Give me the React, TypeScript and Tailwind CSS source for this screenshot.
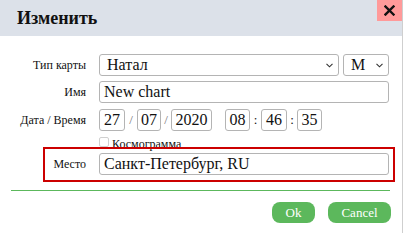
import React from "react";

function Box({ w, v }: { w: string; v: string }) {
  return (
    <div className={`${w} h-[22px] border border-[#b4b4b4] rounded-[3px] flex items-center justify-center text-[16px] leading-none`}>
      {v}
    </div>
  );
}

export default function App() {
  return (
    <div className="w-[403px] h-[233px] bg-white overflow-hidden border-r border-[#cfcfcf] font-['Liberation_Serif'] text-[#111]">
      <div className="h-[36px] bg-[#dce1e9] flex items-start justify-between">
        <div className="pl-[17px] pt-[9px] text-[18px] leading-[18px] font-bold">Изменить</div>
        <div className="w-[25px] h-[21px] bg-[#ff9a9a] flex items-center justify-center">
          <svg width="11" height="11" viewBox="0 0 11 11">
            <path d="M1.5 1.5 L9.5 9.5 M9.5 1.5 L1.5 9.5" stroke="#111" strokeWidth="2.4" strokeLinecap="square" />
          </svg>
        </div>
      </div>

      <div className="flex flex-col">
        <div className="flex items-center h-[22px] mt-[18px]">
          <div className="w-[86px] text-right text-[12px] leading-none">Тип карты</div>
          <div className="ml-[13px] w-[240px] h-[22px] border border-[#b4b4b4] rounded-[3px] flex items-center justify-between pl-[7px] pr-[5px] text-[16px]">
            <span>Натал</span>
            <svg width="7" height="5" viewBox="0 0 7 5">
              <polyline points="0.5,0.8 3.5,3.8 6.5,0.8" fill="none" stroke="#333" strokeWidth="1.1" />
            </svg>
          </div>
          <div className="ml-[4px] w-[46px] h-[22px] border border-[#b4b4b4] rounded-[3px] flex items-center justify-between pl-[7px] pr-[5px] text-[16px]">
            <span>M</span>
            <svg width="7" height="5" viewBox="0 0 7 5">
              <polyline points="0.5,0.8 3.5,3.8 6.5,0.8" fill="none" stroke="#333" strokeWidth="1.1" />
            </svg>
          </div>
        </div>

        <div className="flex items-center h-[22px] mt-[5px]">
          <div className="w-[86px] text-right text-[12px] leading-none">Имя</div>
          <div className="ml-[13px] w-[290px] h-[22px] border border-[#b4b4b4] rounded-[3px] flex items-center pl-[4px] text-[16px]">
            New chart
          </div>
        </div>

        <div className="flex items-center h-[22px] mt-[6px]">
          <div className="w-[86px] text-right text-[12px] leading-none">Дата / Время</div>
          <div className="ml-[13px] flex items-center">
            <Box w="w-[26px]" v="27" />
            <div className="w-[12px] text-center text-[13px] text-[#777]">/</div>
            <Box w="w-[24px]" v="07" />
            <div className="w-[10px] text-center text-[13px] text-[#777]">/</div>
            <Box w="w-[41px]" v="2020" />
            <div className="w-[13px]" />
            <Box w="w-[25px]" v="08" />
            <div className="w-[11px] text-center text-[13px]">:</div>
            <Box w="w-[26px]" v="46" />
            <div className="w-[10px] text-center text-[13px]">:</div>
            <Box w="w-[25px]" v="35" />
          </div>
        </div>

        <div className="flex items-center h-[12px] mt-[5px] ml-[99px]">
          <div className="w-[10px] h-[10px] border border-[#d0d0d0] rounded-[2px]" />
          <div className="ml-[3px] text-[12px] leading-[12px] mt-[3px]">Космограмма</div>
        </div>

        <div className="ml-[43px] w-[352px] mt-[-1px] border-2 border-[#cc0000] pt-[4px] pb-[5px] flex items-center relative">
          <div className="w-[41px] text-right text-[12px] leading-none">Место</div>
          <div className="ml-[13px] w-[290px] h-[22px] border border-[#b4b4b4] rounded-[3px] flex items-center pl-[4px] text-[16px]">
            Санкт-Петербург, RU
          </div>
        </div>

        <div className="ml-[11px] w-[379px] h-px bg-[#5cb85c] mt-[8px]" />

        <div className="flex justify-end gap-[13px] pr-[11px] mt-[11px]">
          <div className="w-[43px] h-[21px] rounded-[8px] bg-[#5cb85c] text-white text-[13px] flex items-center justify-center">Ok</div>
          <div className="w-[63px] h-[21px] rounded-[8px] bg-[#5cb85c] text-white text-[13px] flex items-center justify-center">Cancel</div>
        </div>
      </div>
    </div>
  );
}
